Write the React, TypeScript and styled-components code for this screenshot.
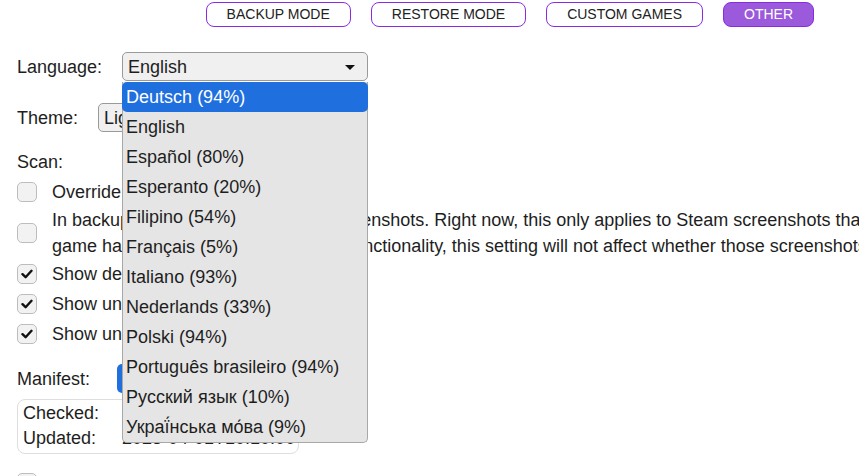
import React from 'react';
import styled, { createGlobalStyle } from 'styled-components';

const GlobalStyle = createGlobalStyle`
  html, body {
    margin: 0;
    padding: 0;
    background: #ffffff;
    overflow: hidden;
  }
  body {
    font-family: "Liberation Sans", Arial, sans-serif;
    font-size: 18px;
    color: #1e1e1e;
  }
`;

const Page = styled.div`
  width: 859px;
  height: 476px;
  overflow: hidden;
`;

const Nav = styled.div`
  display: flex;
  justify-content: flex-end;
  gap: 20px;
  padding: 2px 45px 0 0;
`;

const NavButton = styled.button<{ $active?: boolean }>`
  height: 25px;
  padding: 0 20px;
  border: 1px solid #8a2be2;
  border-radius: 8px;
  background: ${(p) => (p.$active ? '#9b59dc' : '#ffffff')};
  color: ${(p) => (p.$active ? '#ffffff' : '#222222')};
  font-family: "Liberation Sans", Arial, sans-serif;
  font-size: 14px;
  line-height: 23px;
  cursor: pointer;
`;

const Content = styled.div`
  display: flex;
  flex-direction: column;
  padding: 25px 0 0 17px;
`;

const Row = styled.div<{ $gap?: number; $top?: number }>`
  display: flex;
  align-items: center;
  gap: ${(p) => p.$gap ?? 20}px;
  margin-top: ${(p) => p.$top ?? 0}px;
`;

const Label = styled.span`
  white-space: nowrap;
  line-height: 22px;
`;

const SelectWrap = styled.div`
  position: relative;
`;

const SelectBox = styled.div<{ $width: number }>`
  box-sizing: border-box;
  display: flex;
  align-items: center;
  justify-content: space-between;
  width: ${(p) => p.$width}px;
  height: 29px;
  padding: 1px 12px 0 5px;
  background: #f0f0f0;
  border: 1px solid #9a9a9a;
  border-radius: 5px;
`;

const Caret = styled.span`
  width: 0;
  height: 0;
  border-left: 5px solid transparent;
  border-right: 5px solid transparent;
  border-top: 5px solid #111;
`;

const Menu = styled.div`
  position: absolute;
  top: 30px;
  left: 0;
  z-index: 10;
  box-sizing: border-box;
  width: 246px;
  background: #e5e5e5;
  border: 1px solid #a8a8a8;
  border-top: none;
  border-radius: 0 0 5px 5px;
`;

const MenuItem = styled.div<{ $selected?: boolean }>`
  height: 30px;
  line-height: 30px;
  padding-left: 4px;
  white-space: nowrap;
  border-radius: 5px;
  margin: 0 -1px;
  background: ${(p) => (p.$selected ? '#1f6fde' : 'transparent')};
  color: ${(p) => (p.$selected ? '#ffffff' : '#1e1e1e')};
`;

const CheckList = styled.div`
  display: flex;
  flex-direction: column;
  margin-top: 4px;
`;

const CheckRow = styled.div`
  display: flex;
  align-items: center;
  gap: 15px;
  min-height: 30px;
`;

const Box = styled.span`
  flex: none;
  box-sizing: border-box;
  width: 20px;
  height: 20px;
  display: flex;
  align-items: center;
  justify-content: center;
  background: #f2f2f2;
  border: 1px solid #bdbdbd;
  border-radius: 5px;
`;

const CheckText = styled.span`
  white-space: nowrap;
  line-height: 26px;
`;

const BlueButton = styled.div`
  width: 90px;
  height: 29px;
  border-radius: 5px;
  background: #1f6fde;
  color: #fff;
  display: flex;
  align-items: center;
  justify-content: center;
`;

const InfoBox = styled.div`
  box-sizing: border-box;
  width: 282px;
  margin-top: 6px;
  padding: 2px 4px 4px 5px;
  border: 1px solid #dedede;
  border-radius: 8px;
  display: grid;
  grid-template-columns: 99px max-content;
  row-gap: 3px;
  line-height: 22px;
  white-space: nowrap;
`;

const languages = [
  'Deutsch (94%)',
  'English',
  'Español (80%)',
  'Esperanto (20%)',
  'Filipino (54%)',
  'Français (5%)',
  'Italiano (93%)',
  'Nederlands (33%)',
  'Polski (94%)',
  'Português brasileiro (94%)',
  'Русский язык (10%)',
  'Украї́нська мо́ва (9%)',
];

const Check: React.FC<{ checked?: boolean }> = ({ checked }) => (
  <Box>
    {checked && (
      <svg width="12" height="10" viewBox="0 0 12 10">
        <path d="M1.5 5.2 L4.6 8.2 L10.5 1.8" fill="none" stroke="#111" strokeWidth="2.4" strokeLinecap="round" strokeLinejoin="round" />
      </svg>
    )}
  </Box>
);

const App: React.FC = () => {
  return (
    <Page>
      <GlobalStyle />
      <Nav>
        <NavButton>BACKUP MODE</NavButton>
        <NavButton>RESTORE MODE</NavButton>
        <NavButton>CUSTOM GAMES</NavButton>
        <NavButton $active>OTHER</NavButton>
      </Nav>
      <Content>
        <Row>
          <Label>Language:</Label>
          <SelectWrap>
            <SelectBox $width={246}>
              <span>English</span>
              <Caret />
            </SelectBox>
            <Menu>
              {languages.map((lang, i) => (
                <MenuItem key={lang} $selected={i === 0}>
                  {lang}
                </MenuItem>
              ))}
            </Menu>
          </SelectWrap>
        </Row>

        <Row $top={22}>
          <Label>Theme:</Label>
          <SelectBox $width={120}>
            <span>Light</span>
            <Caret />
          </SelectBox>
        </Row>

        <Row $top={19}>
          <Label>Scan:</Label>
        </Row>

        <CheckList>
          <CheckRow>
            <Check />
            <CheckText>Override maximum threads</CheckText>
          </CheckRow>
          <CheckRow>
            <Check />
            <CheckText>
              In backups, exclude store-specific screenshots. Right now, this only applies to Steam screenshots that you've taken. If a
              <br />
              game has its own built-in screenshot functionality, this setting will not affect whether those screenshots are backed up.
            </CheckText>
          </CheckRow>
          <CheckRow>
            <Check checked />
            <CheckText>Show deselected games</CheckText>
          </CheckRow>
          <CheckRow>
            <Check checked />
            <CheckText>Show unchanged games</CheckText>
          </CheckRow>
          <CheckRow>
            <Check checked />
            <CheckText>Show unscanned games</CheckText>
          </CheckRow>
        </CheckList>

        <Row $gap={27} $top={15}>
          <Label>Manifest:</Label>
          <BlueButton>Refresh</BlueButton>
        </Row>

        <InfoBox>
          <span>Checked:</span>
          <span>2023-04-01T10:10:00</span>
          <span>Updated:</span>
          <span>2023-04-01T10:10:00</span>
        </InfoBox>

        <Row $top={18}>
          <Check />
          <Label>Back up saves in compressed format</Label>
        </Row>
      </Content>
    </Page>
  );
};

export default App;
